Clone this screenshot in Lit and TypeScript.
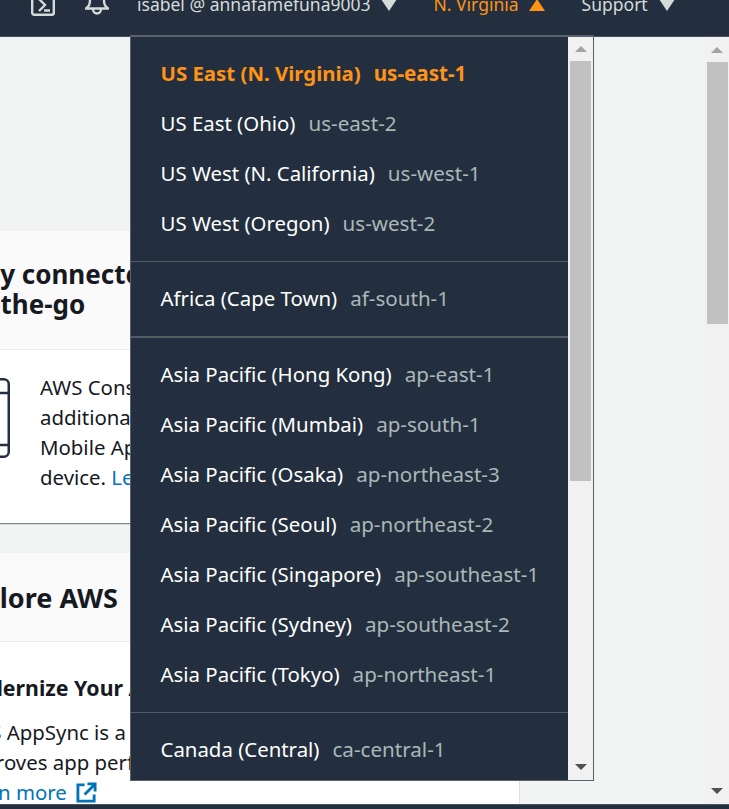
import { LitElement, html, css } from "lit";
import { customElement } from "lit/decorators.js";

type Region = { name: string; code: string; active?: boolean };
const groups: { regions: Region[]; thick?: boolean }[] = [
  { regions: [
    { name: "US East (N. Virginia)", code: "us-east-1", active: true },
    { name: "US East (Ohio)", code: "us-east-2" },
    { name: "US West (N. California)", code: "us-west-1" },
    { name: "US West (Oregon)", code: "us-west-2" },
  ] },
  { regions: [{ name: "Africa (Cape Town)", code: "af-south-1" }], thick: true },
  { regions: [
    { name: "Asia Pacific (Hong Kong)", code: "ap-east-1" },
    { name: "Asia Pacific (Mumbai)", code: "ap-south-1" },
    { name: "Asia Pacific (Osaka)", code: "ap-northeast-3" },
    { name: "Asia Pacific (Seoul)", code: "ap-northeast-2" },
    { name: "Asia Pacific (Singapore)", code: "ap-southeast-1" },
    { name: "Asia Pacific (Sydney)", code: "ap-southeast-2" },
    { name: "Asia Pacific (Tokyo)", code: "ap-northeast-1" },
  ] },
  { regions: [{ name: "Canada (Central)", code: "ca-central-1" }] },
];

@customElement("app-root")
export class AppRoot extends LitElement {
  static styles = css`
    :host { display: block; font-family: "Noto Sans", "Open Sans", sans-serif; }
    .page { position: relative; width: 729px; height: 809px; overflow: hidden; background: #f2f3f3; display: flex; flex-direction: column; color: #16191f; }
    header { height: 36px; flex: none; background: #232f3e; border-bottom: 1px solid #4a5361; overflow: hidden; box-sizing: content-box; }
    .nav { display: flex; align-items: center; height: 24px; margin-top: -8px; padding-left: 31px; font-size: 17.5px; color: #d5dbdb; white-space: nowrap; }
    .term { margin-right: 30px; flex: none; margin-top: 0; }
    .bell { margin-right: 28px; flex: none; margin-top: -2px; }
    .user { margin-right: 10px; }
    .tri { width: 16px; height: 12px; flex: none; margin-right: 37px; margin-top: 2px; }
    .region { color: #ff9316; margin-right: 10px; }
    .sup { margin-right: 11px; }
    .body { flex: 1; display: flex; min-height: 0; }
    main { width: 519px; flex: none; overflow: hidden; padding-top: 194px; box-sizing: border-box; white-space: nowrap; }
    .gutter { flex: 1; border-left: 1px solid #dfe2e2; }
    .card { background: #fff; box-shadow: 0 1px 1px rgba(0,28,36,.3), 1px 1px 1px rgba(0,28,36,.15), -1px 1px 1px rgba(0,28,36,.15); }
    .card + .card { margin-top: 30px; }
    .card-head { background: #fafafa; border-bottom: 1px solid #eaeded; padding: 28px 0 30px 0; }
    .card-head h2 { margin: 0 0 0 -41px; font-size: 26px; line-height: 30px; font-weight: 700; }
    .c1 .card-body { height: 173px; box-sizing: border-box; display: flex; gap: 30px; padding-top: 22px; }
    .phone { flex: none; margin-left: -30px; margin-top: 6px; }
    .copy { font-size: 20.4px; line-height: 30px; }
    a { color: #0073bb; text-decoration: none; }
    .c2 .card-body { padding: 31px 0 0 0; margin-left: -42px; font-size: 20.4px; line-height: 30px; }
    .c2 h3 { margin: 0 0 0 -2px; font-size: 21.3px; line-height: 30px; font-weight: 700; }
    .c2 .card-head { padding: 30px 0 28px; }
    .c2 .card-head h2 { margin-left: -48px; font-size: 27px; }
    .c2 a { display: inline-block; margin-left: -3px; }
    .ext { display: inline-block; vertical-align: -3px; margin-left: 9px; }
    .c2 p { margin: 0 0 0 1px; padding-top: 14px; }
    .page-bar { flex: none; width: 24px; background: #f1f1f1; display: flex; flex-direction: column; align-items: center; }
    .thumb { width: 21px; background: #c1c1c1; }
    .page-thumb { height: 262px; margin-top: 9px; }
    .arrow { width: 12px; height: 6px; flex: none; display: block; }
    .up { margin-top: 10px; }
    .spacer { flex: 1; }
    .page-bar .down { margin-bottom: 10px; }
    footer { height: 4px; flex: none; background: #232f3e; border-top: 1px solid #4a5361; }

    .menu { position: absolute; left: 130px; top: 35px; width: 464px; height: 746px; box-sizing: border-box; border: 1px solid #5a6270; border-top-width: 2px; background: #f1f1f1; display: flex; overflow: hidden; }
    .list { width: 437px; flex: none; background: #232f3e; overflow: hidden; }
    .group { padding: 12px 0; border-bottom: 1px solid #545b64; }
    .group.thick { border-bottom-width: 2px; }
    .group:last-child { border-bottom: none; }
    .row { height: 50px; box-sizing: border-box; padding: 0 0 2px 29.5px; display: flex; align-items: center; gap: 13px; font-size: 20.4px; white-space: nowrap; color: #fff; }
    .row .code { color: #aab7b8; font-size: 20.6px; }
    .row.active, .row.active .code { color: #ff9316; font-weight: 700; }
    .menu-bar { flex: 1; display: flex; flex-direction: column; align-items: center; }
    .menu-thumb { height: 420px; margin-top: 9px; }
    .menu-bar .up { margin-top: 9px; }
    .menu-bar .down { margin-bottom: 10px; }
  `;

  private tri(color: string, up = false, cls = "tri") {
    return html`<svg class=${cls} viewBox="0 0 16 12"><path d=${up ? "M8 0 16 12H0Z" : "M0 0H16L8 12Z"} fill=${color}></path></svg>`;
  }
  private arrow(up: boolean, color: string) {
    return html`<svg class="arrow ${up ? "up" : "down"}" viewBox="0 0 12 6"><path d=${up ? "M6 0 12 6H0Z" : "M0 0H12L6 6Z"} fill=${color}></path></svg>`;
  }

  render() {
    return html`<div class="page">
      <header>
        <div class="nav">
          <svg class="term" width="24" height="24" viewBox="0 0 24 24" fill="none" stroke="#d5dbdb" stroke-width="2.4">
            <rect x="1.2" y="1.2" width="21.6" height="21.6" rx="2"></rect>
            <path d="M8 7l6 6-6 6M13 18.500h6"></path>
          </svg>
          <svg class="bell" width="24" height="28" viewBox="0 0 24 28" fill="none" stroke="#d5dbdb" stroke-width="2.4">
            <path d="M1 19.500h22c-3-2.500-4-4-4-9 0-4.500-3-7.500-7-7.500s-7 3-7 7.500c0 5-1 6.500-4 9Z"></path>
            <path d="M8 20c0 3 2 4.500 4 4.500s4-1.500 4-4.500"></path>
          </svg>
          <span class="user">isabel @ annafamefuna9003</span>
          ${this.tri("#d5dbdb")}
          <span class="region">N. Virginia</span>
          ${this.tri("#ff9316", true)}
          <span class="sup">Support</span>
          ${this.tri("#d5dbdb")}
        </div>
      </header>
      <div class="body">
        <main>
          <section class="card c1">
            <div class="card-head"><h2>Stay connected<br />on-the-go</h2></div>
            <div class="card-body">
              <svg class="phone" width="40" height="80" viewBox="0 0 40 80" fill="none" stroke="#232f3e" stroke-width="2.5">
                <rect x="1.250" y="1.250" width="37.500" height="77.500" rx="5"></rect>
                <path d="M0 15h39M0 67h39"></path>
              </svg>
              <div class="copy">AWS Console Mobile App<br />additional services on the<br />Mobile App on your mobile<br />device. <a href="#">Learn more</a></div>
            </div>
          </section>
          <section class="card c2">
            <div class="card-head"><h2>Explore AWS</h2></div>
            <div class="card-body">
              <h3>Modernize Your Apps</h3>
              <p>AWS AppSync is a managed<br />improves app performance<br /><a href="#">Learn more<svg class="ext" width="21" height="21" viewBox="0 0 22 22" fill="none" stroke="#0073bb" stroke-width="3"><path d="M9 3H2v17h17v-7M12 2h8v8M20 2 9 13"></path></svg></a></p>
            </div>
          </section>
        </main>
        <div class="gutter"></div>
        <div class="page-bar">
          ${this.arrow(true, "#a3a3a3")}
          <div class="thumb page-thumb"></div>
          <div class="spacer"></div>
          ${this.arrow(false, "#505050")}
        </div>
      </div>
      <footer></footer>
      <div class="menu">
        <div class="list">
          ${groups.map((g) => html`<div class="group ${g.thick ? "thick" : ""}">
            ${g.regions.map((r) => html`<div class="row ${r.active ? "active" : ""}"><span>${r.name}</span><span class="code">${r.code}</span></div>`)}
          </div>`)}
        </div>
        <div class="menu-bar">
          ${this.arrow(true, "#a3a3a3")}
          <div class="thumb menu-thumb"></div>
          <div class="spacer"></div>
          ${this.arrow(false, "#505050")}
        </div>
      </div>
    </div>`;
  }
}
